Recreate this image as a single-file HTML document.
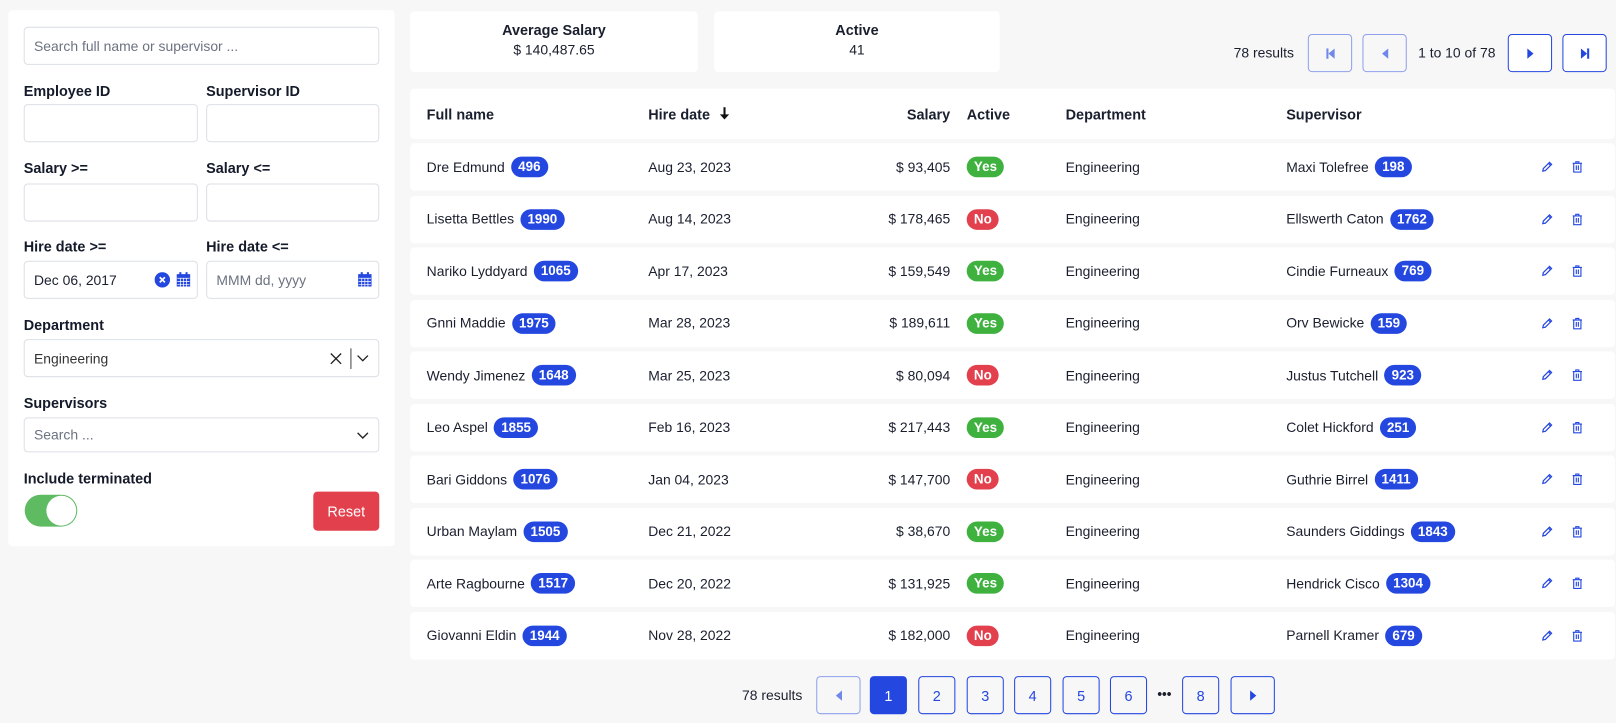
<!DOCTYPE html>
<html><head><meta charset="utf-8">
<style>
html,body{margin:0;padding:0;background:#f7f7f7;width:1616px;height:723px;overflow:hidden}
#w{position:absolute;left:0;top:0;width:1568px;height:702px;transform:scale(1.0306);transform-origin:0 0;font-family:"Liberation Sans",sans-serif;font-size:13.5px;color:#1a1f2e}
.a{position:absolute}
.card{position:absolute;background:#fff;border-radius:4px}
.lbl{position:absolute;font-weight:bold;font-size:14px;color:#141a2a}
.inp{position:absolute;border:1px solid #dcdfe4;border-radius:4px;background:#fff;box-sizing:border-box}
.ph{position:absolute;left:9px;top:50%;transform:translateY(-50%);color:#6b7280;white-space:nowrap}
.row{position:absolute;left:398px;width:1169px;height:46px;background:#fff;border-radius:4px}
.row .c{position:absolute;top:0;height:100%;display:flex;align-items:center;white-space:nowrap}
.pill{display:inline-block;background:#2447e0;color:#fff;font-weight:bold;border-radius:10px;padding:2px 7px;font-size:13px;line-height:16px;margin-left:6px}
.yes,.no{display:inline-block;color:#fff;font-weight:bold;border-radius:10px;padding:2px 7px;font-size:13px;line-height:16px}
.yes{background:#3fb13f}.no{background:#e3404d}
.btn{position:absolute;border:1px solid #2447e0;border-radius:4px;box-sizing:border-box;background:#fff;color:#2447e0;text-align:center;display:flex;align-items:center;justify-content:center}
.dis{border-color:#8fa0ee;background:transparent}
.b2{position:absolute;top:656px;height:37px;width:36px;border:1px solid #2447e0;border-radius:4px;box-sizing:border-box;color:#2447e0;display:flex;align-items:center;justify-content:center;font-size:14px}
</style></head><body><div id="w">

<div class="card" style="left:8px;top:10px;width:375px;height:520px"></div>
<div class="inp" style="left:23px;top:26px;width:345px;height:37px"><span class="ph">Search full name or supervisor ...</span></div>
<div class="lbl" style="left:23px;top:80px">Employee ID</div>
<div class="lbl" style="left:200px;top:80px">Supervisor ID</div>
<div class="inp" style="left:23px;top:101px;width:169px;height:37px"></div>
<div class="inp" style="left:200px;top:101px;width:168px;height:37px"></div>
<div class="lbl" style="left:23px;top:155px">Salary &gt;=</div>
<div class="lbl" style="left:200px;top:155px">Salary &lt;=</div>
<div class="inp" style="left:23px;top:178px;width:169px;height:37px"></div>
<div class="inp" style="left:200px;top:178px;width:168px;height:37px"></div>
<div class="lbl" style="left:23px;top:231px">Hire date &gt;=</div>
<div class="lbl" style="left:200px;top:231px">Hire date &lt;=</div>
<div class="inp" style="left:23px;top:253px;width:169px;height:37px"><span class="ph" style="color:#1a1f2e">Dec 06, 2017</span>
<svg class="a" style="left:126px;top:10px" width="15" height="15"><circle cx="7.5" cy="7.5" r="7.5" fill="#2447e0"/><path d="M5 5L10 10M10 5L5 10" stroke="#fff" stroke-width="1.6"/></svg>
<svg class="a" style="left:147px;top:10px" width="14" height="15"><rect x="0.5" y="2" width="13" height="12" fill="#2447e0"/><rect x="3" y="0" width="2" height="3" fill="#2447e0"/><rect x="9" y="0" width="2" height="3" fill="#2447e0"/><path d="M1 6H13M1 9H13M1 12H13M4 6V14M7 6V14M10 6V14" stroke="#fff" stroke-width="0.7"/></svg></div>
<div class="inp" style="left:200px;top:253px;width:168px;height:37px"><span class="ph">MMM dd, yyyy</span>
<svg class="a" style="left:146px;top:10px" width="14" height="15"><rect x="0.5" y="2" width="13" height="12" fill="#2447e0"/><rect x="3" y="0" width="2" height="3" fill="#2447e0"/><rect x="9" y="0" width="2" height="3" fill="#2447e0"/><path d="M1 6H13M1 9H13M1 12H13M4 6V14M7 6V14M10 6V14" stroke="#fff" stroke-width="0.7"/></svg></div>
<div class="lbl" style="left:23px;top:307px">Department</div>
<div class="inp" style="left:23px;top:329px;width:345px;height:37px"><span class="ph" style="color:#333">Engineering</span>
<svg class="a" style="left:296px;top:12px" width="12" height="12"><path d="M1 1L11 11M11 1L1 11" stroke="#222" stroke-width="1.3"/></svg>
<div class="a" style="left:316px;top:8px;width:1px;height:20px;background:#444"></div>
<svg class="a" style="left:322px;top:14px" width="12" height="8"><path d="M1 1L6 6L11 1" stroke="#222" stroke-width="1.3" fill="none"/></svg></div>
<div class="lbl" style="left:23px;top:383px">Supervisors</div>
<div class="inp" style="left:23px;top:405px;width:345px;height:34px"><span class="ph">Search ...</span>
<svg class="a" style="left:322px;top:13px" width="12" height="8"><path d="M1 1L6 6L11 1" stroke="#222" stroke-width="1.3" fill="none"/></svg></div>
<div class="lbl" style="left:23px;top:456px">Include terminated</div>
<div class="a" style="left:24px;top:480px;width:51px;height:31px;border-radius:16px;background:#5fbb62"></div>
<div class="a" style="left:45px;top:481px;width:29px;height:29px;border-radius:50%;background:#fff"></div>
<div class="a" style="left:304px;top:477px;width:64px;height:38px;border-radius:4px;background:#e3404d;color:#fff;font-size:14px;display:flex;align-items:center;justify-content:center">Reset</div>

<div class="card" style="left:398px;top:11px;width:279px;height:59px;text-align:center"><div style="font-weight:bold;font-size:14px;margin-top:10px">Average Salary</div><div style="margin-top:4px">$ 140,487.65</div></div>
<div class="card" style="left:693px;top:11px;width:277px;height:59px;text-align:center"><div style="font-weight:bold;font-size:14px;margin-top:10px">Active</div><div style="margin-top:4px">41</div></div>

<div class="a" style="left:1197px;top:44px">78 results</div>
<div class="btn dis" style="left:1269px;top:33px;width:43px;height:37px"><svg width="10" height="12"><rect x="1" y="1" width="2" height="10" fill="#7088ea"/><path d="M9 1L3 6L9 11Z" fill="#7088ea"/></svg></div>
<div class="btn dis" style="left:1322px;top:33px;width:43px;height:37px"><svg width="8" height="12"><path d="M7 1L1 6L7 11Z" fill="#7088ea"/></svg></div>
<div class="a" style="left:1376px;top:44px">1 to 10 of 78</div>
<div class="btn" style="left:1463px;top:33px;width:43px;height:37px"><svg width="8" height="12"><path d="M1 1L7 6L1 11Z" fill="#2447e0"/></svg></div>
<div class="btn" style="left:1516px;top:33px;width:43px;height:37px"><svg width="10" height="12"><path d="M1 1L7 6L1 11Z" fill="#2447e0"/><rect x="7" y="1" width="2" height="10" fill="#2447e0"/></svg></div>

<div class="row" style="top:86px;height:49px;font-weight:bold;font-size:14px">
<span class="c" style="left:16px">Full name</span>
<span class="c" style="left:231px">Hire date <svg width="12" height="13" style="margin-left:8px"><path d="M6 0V9" stroke="#111" stroke-width="2"/><path d="M1.5 7L6 12L10.5 7Z" fill="#111"/></svg></span>
<span class="c" style="right:645px">Salary</span>
<span class="c" style="left:540px">Active</span>
<span class="c" style="left:636px">Department</span>
<span class="c" style="left:850px">Supervisor</span>
</div>

<div id="rows"></div>
<script>
var d=[["Dre Edmund","496","Aug 23, 2023","$ 93,405",1,"Maxi Tolefree","198"],
["Lisetta Bettles","1990","Aug 14, 2023","$ 178,465",0,"Ellswerth Caton","1762"],
["Nariko Lyddyard","1065","Apr 17, 2023","$ 159,549",1,"Cindie Furneaux","769"],
["Gnni Maddie","1975","Mar 28, 2023","$ 189,611",1,"Orv Bewicke","159"],
["Wendy Jimenez","1648","Mar 25, 2023","$ 80,094",0,"Justus Tutchell","923"],
["Leo Aspel","1855","Feb 16, 2023","$ 217,443",1,"Colet Hickford","251"],
["Bari Giddons","1076","Jan 04, 2023","$ 147,700",0,"Guthrie Birrel","1411"],
["Urban Maylam","1505","Dec 21, 2022","$ 38,670",1,"Saunders Giddings","1843"],
["Arte Ragbourne","1517","Dec 20, 2022","$ 131,925",1,"Hendrick Cisco","1304"],
["Giovanni Eldin","1944","Nov 28, 2022","$ 182,000",0,"Parnell Kramer","679"]];
var h="";
var pen='<svg width="12" height="12"><path d="M2 10L2.5 7.5L8.5 1.5L10.5 3.5L4.5 9.5Z M7.5 2.5L9.5 4.5" stroke="#2447e0" stroke-width="1.2" fill="none"/></svg>';
var tr='<svg width="11" height="12"><path d="M1 2.5H10M4 2.5V1H7V2.5M2 2.5V11H9V2.5M4.5 4.5V9M6.5 4.5V9" stroke="#2447e0" stroke-width="1.1" fill="none"/></svg>';
for(var i=0;i<d.length;i++){var r=d[i];var t=139+i*50.5;
h+='<div class="row" style="top:'+t+'px"><span class="c" style="left:16px">'+r[0]+'<span class="pill">'+r[1]+'</span></span><span class="c" style="left:231px">'+r[2]+'</span><span class="c" style="right:645px">'+r[3]+'</span><span class="c" style="left:540px">'+(r[4]?'<span class="yes">Yes</span>':'<span class="no">No</span>')+'</span><span class="c" style="left:636px">Engineering</span><span class="c" style="left:850px">'+r[5]+'<span class="pill">'+r[6]+'</span></span><span class="c" style="left:1097px">'+pen+'</span><span class="c" style="left:1127px">'+tr+'</span></div>';}
document.getElementById("rows").innerHTML=h;
</script>

<div class="a" style="left:720px;top:667px">78 results</div>
<div class="b2" style="left:792px;width:43px;border-color:#8fa0ee"><svg width="8" height="12"><path d="M7 1L1 6L7 11Z" fill="#7088ea"/></svg></div>
<div class="b2" style="left:844px;background:#2447e0;color:#fff">1</div>
<div class="b2" style="left:891px">2</div>
<div class="b2" style="left:938px">3</div>
<div class="b2" style="left:984px">4</div>
<div class="b2" style="left:1031px">5</div>
<div class="b2" style="left:1077px">6</div>
<div class="a" style="left:1123px;top:666px;font-weight:bold;font-size:13px">•••</div>
<div class="b2" style="left:1147px">8</div>
<div class="b2" style="left:1194px;width:43px"><svg width="8" height="12"><path d="M1 1L7 6L1 11Z" fill="#2447e0"/></svg></div>
</div></body></html>
